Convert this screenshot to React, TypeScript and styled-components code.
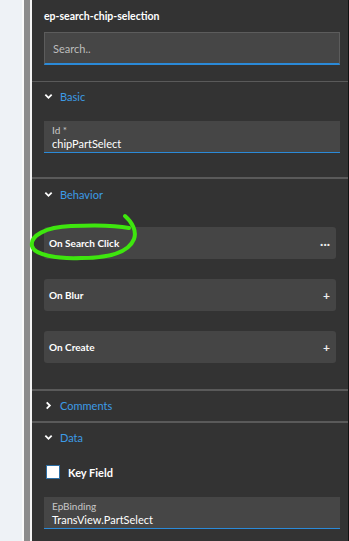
import React from 'react';
import styled, { createGlobalStyle } from 'styled-components';

const GlobalStyle = createGlobalStyle`
  html, body {
    margin: 0;
    padding: 0;
    background: #eef2f6;
    font-family: Lato, 'Noto Sans', sans-serif;
  }
`;

const Page = styled.div`
  display: flex;
  width: 349px;
  height: 541px;
  overflow: hidden;
`;

const Gutter = styled.div`
  width: 22px;
  background: #eef2f6;
  border-right: 2px solid #fafafa;
`;

const Rail = styled.div`
  width: 6px;
  background: #8c8c8c;
  border-right: 2px solid #f4f4f4;
`;

const Panel = styled.div`
  flex: 1;
  background: #333333;
  border-right: 1px solid #111;
  color: #fff;
`;

const Top = styled.div`
  padding: 8px 8px 16px 12px;
  border-bottom: 1px solid #5a5a5a;
`;

const Title = styled.div`
  font-size: 10.5px;
  font-weight: 700;
  line-height: 16px;
  margin-bottom: 8px;
`;

const SearchBox = styled.div`
  height: 33px;
  background: #464646;
  border: 1px solid #5c5c5c;
  border-bottom: 2px solid #2b8ad8;
  box-sizing: border-box;
  display: flex;
  align-items: center;
  padding-left: 8px;
  font-size: 11px;
  color: #bdbdbd;
`;

const Section = styled.div<{ $last?: boolean; $pt?: number; $pb?: number }>`
  padding: ${(p) => p.$pt ?? 4}px 8px ${(p) => p.$pb ?? 24}px 12px;
  border-bottom: ${(p) => (p.$last ? 'none' : '2px solid #5a5a5a')};
`;

const Header = styled.div<{ $mb?: number }>`
  display: flex;
  align-items: center;
  gap: 7px;
  height: 20px;
  color: #3c9be6;
  font-size: 11px;
  margin-bottom: ${(p) => p.$mb ?? 0}px;
  svg {
    width: 9px;
    height: 9px;
  }
`;

const Field = styled.div`
  background: #464646;
  border-bottom: 1px solid #2b8ad8;
  height: 32px;
  box-sizing: border-box;
  padding: 2px 8px 0;
  display: flex;
  flex-direction: column;
  justify-content: center;
`;

const FieldLabel = styled.div`
  font-size: 10px;
  color: #c8c8c8;
  line-height: 13px;
`;

const FieldValue = styled.div`
  font-size: 11px;
  color: #fff;
  line-height: 14px;
`;

const Events = styled.div`
  display: flex;
  flex-direction: column;
  gap: 20px;
  padding-right: 4px;
`;

const EventCard = styled.div`
  position: relative;
  height: 32px;
  background: #454545;
  border-radius: 3px;
  display: flex;
  align-items: center;
  justify-content: space-between;
  padding: 0 6px 0 5px;
  font-size: 10px;
  font-weight: 700;
`;

const EventAction = styled.span`
  font-size: 12px;
  font-weight: 700;
  color: #eee;
`;

const Scribble = styled.svg`
  position: absolute;
  left: -15px;
  top: -10px;
  width: 108px;
  height: 42px;
  pointer-events: none;
  overflow: visible;
`;

const CheckRow = styled.label`
  display: flex;
  align-items: center;
  gap: 8px;
  height: 14px;
  padding-left: 2px;
  margin: 0 0 18px;
  font-size: 11px;
  font-weight: 700;
`;

const Box = styled.span`
  width: 14px;
  height: 14px;
  box-sizing: border-box;
  background: #fff;
  border: 1px solid #2d6fa5;
`;

const Chevron = ({ open }: { open: boolean }) => (
  <svg viewBox="0 0 10 10">
    <path
      d={open ? 'M1.5 3 L5 6.5 L8.5 3' : 'M3 1.5 L6.5 5 L3 8.5'}
      fill="none"
      stroke="#fff"
      strokeWidth="2"
    />
  </svg>
);

export default function App() {
  return (
    <>
      <GlobalStyle />
      <Page>
        <Gutter />
        <Rail />
        <Panel>
          <Top>
            <Title>ep-search-chip-selection</Title>
            <SearchBox>Search..</SearchBox>
          </Top>
          <Section>
            <Header $mb={15}>
              <Chevron open />
              Basic
            </Header>
            <Field>
              <FieldLabel>Id *</FieldLabel>
              <FieldValue>chipPartSelect</FieldValue>
            </Field>
          </Section>
          <Section $pt={5} $pb={26}>
            <Header $mb={23}>
              <Chevron open />
              Behavior
            </Header>
            <Events>
              <EventCard>
                On Search Click
                <EventAction>···</EventAction>
                <Scribble viewBox="0 0 108 42">
                  <path
                    d="M96 -1 C103 5 108 14 105 22 C100 35 82 41 52 41 C28 42 5 38 3 29 C1 19 16 10 42 9 C64 8 86 8 100 11"
                    fill="none"
                    stroke="#3ee60e"
                    strokeWidth="4"
                    strokeLinecap="round"
                  />
                </Scribble>
              </EventCard>
              <EventCard>
                On Blur
                <EventAction>+</EventAction>
              </EventCard>
              <EventCard>
                On Create
                <EventAction>+</EventAction>
              </EventCard>
            </Events>
          </Section>
          <Section $pb={6}>
            <Header>
              <Chevron open={false} />
              Comments
            </Header>
          </Section>
          <Section $last>
            <Header $mb={18}>
              <Chevron open />
              Data
            </Header>
            <CheckRow>
              <Box />
              Key Field
            </CheckRow>
            <Field>
              <FieldLabel>EpBinding</FieldLabel>
              <FieldValue>TransView.PartSelect</FieldValue>
            </Field>
          </Section>
        </Panel>
      </Page>
    </>
  );
}
